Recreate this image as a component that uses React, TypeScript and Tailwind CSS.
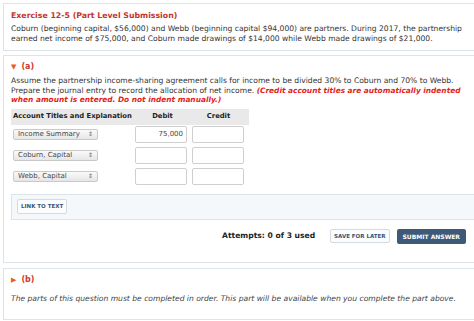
const font = { fontFamily: '"DejaVu Sans", Verdana, sans-serif' }

const rows = [
  { account: 'Income Summary', debit: '75,000' },
  { account: 'Coburn, Capital', debit: '' },
  { account: 'Webb, Capital', debit: '' },
]

function Select({ label }: { label: string }) {
  return (
    <div className="flex h-[11px] w-[85px] items-center justify-between rounded-[2px] border border-[#c9c9c9] bg-gradient-to-b from-[#fafafa] to-[#e6e6e6] px-[4px] text-[7px] text-[#444]">
      <span>{label}</span>
      <span className="text-[6px] leading-none text-[#666]">⇕</span>
    </div>
  )
}

function Input({ value }: { value: string }) {
  return (
    <div className="flex h-[17px] w-[52px] items-center justify-end rounded-[2px] border border-[#cfcfcf] bg-white pr-[3px] text-[7px] text-[#444]">
      {value}
    </div>
  )
}

export default function App() {
  return (
    <div className="h-[321px] w-[474px] overflow-hidden bg-white pl-[3px] pt-[3px] text-[#333]" style={font}>
      <section className="border-y border-l border-[#dce3e9] px-[7px] pb-[6px] pt-[7px]">
        <h1 className="text-[7.8px] font-bold leading-[10px] text-[#c3352b]">Exercise 12-5 (Part Level Submission)</h1>
        <p className="mt-[3px] whitespace-nowrap text-[7.6px] leading-[10px]">
          Coburn (beginning capital, $56,000) and Webb (beginning capital $94,000) are partners. During 2017, the partnership
          <br />
          earned net income of $75,000, and Coburn made drawings of $14,000 while Webb made drawings of $21,000.
        </p>
      </section>

      <section className="mt-[4px] h-[208px] border-y border-l border-[#dce3e9] pl-[7px] pt-[6px]">
        <div className="flex items-center gap-[5px] text-[8px] font-bold leading-[10px] text-[#d0392d]">
          <span className="text-[7px] text-[#ee5a24]">▼</span>
          <span>(a)</span>
        </div>
        <p className="mt-[4px] whitespace-nowrap text-[7.6px] leading-[9.5px]">
          Assume the partnership income-sharing agreement calls for income to be divided 30% to Coburn and 70% to Webb.
          <br />
          Prepare the journal entry to record the allocation of net income.{' '}
          <span className="text-[7.4px] font-bold italic text-[#e3231b]">
            (Credit account titles are automatically indented
            <br />
            when amount is entered. Do not indent manually.)
          </span>
        </p>

        <div className="mt-[4px] w-[238px]">
          <div className="flex h-[16px] items-center whitespace-nowrap bg-[#e9e9e9] text-[6.8px] font-bold text-[#222]">
            <span className="w-[124px] pl-[2px]">Account Titles and Explanation</span>
            <span className="w-[55px] text-center">Debit</span>
            <span className="w-[57px] text-center">Credit</span>
          </div>
          <div className="mt-[1px] flex flex-col gap-[4px]">
            {rows.map((r) => (
              <div key={r.account} className="flex h-[17px] items-center">
                <div className="w-[124px] pl-[2px]">
                  <Select label={r.account} />
                </div>
                <Input value={r.debit} />
                <div className="w-[5px]" />
                <Input value="" />
              </div>
            ))}
          </div>
        </div>

        <div className="mt-[9px] flex h-[26px] items-center border-y border-l border-[#dce3e9] bg-[#f5f8fb] pl-[5px]">
          <div className="rounded-[2px] border border-[#d3dae2] bg-[#fbfcfd] px-[3px] py-[2px] text-[5.5px] font-bold text-[#3b5473]">
            LINK TO TEXT
          </div>
        </div>

        <div className="mt-[9px] flex items-center justify-end pr-[8px]">
          <span className="text-[7.6px] font-bold text-[#222]">Attempts: 0 of 3 used</span>
          <div className="ml-[15px] rounded-[2px] border border-[#d3dae2] bg-[#fbfcfd] px-[3px] py-[2px] text-[5.5px] font-bold text-[#3b5473]">
            SAVE FOR LATER
          </div>
          <div className="ml-[7px] rounded-[2px] bg-[#3e5a77] px-[6px] py-[3px] text-[6px] font-bold text-white">
            SUBMIT ANSWER
          </div>
        </div>
      </section>

      <section className="mt-[5px] h-[52px] border-y border-l border-[#dce3e9] pl-[7px] pt-[6px]">
        <div className="flex items-center gap-[5px] text-[8px] font-bold leading-[10px] text-[#d0392d]">
          <span className="text-[7px] text-[#ee5a24]">▶</span>
          <span>(b)</span>
        </div>
        <p className="mt-[9px] whitespace-nowrap text-[7.6px] italic leading-[10px] text-[#444]">
          The parts of this question must be completed in order. This part will be available when you complete the part above.
        </p>
      </section>
    </div>
  )
}
